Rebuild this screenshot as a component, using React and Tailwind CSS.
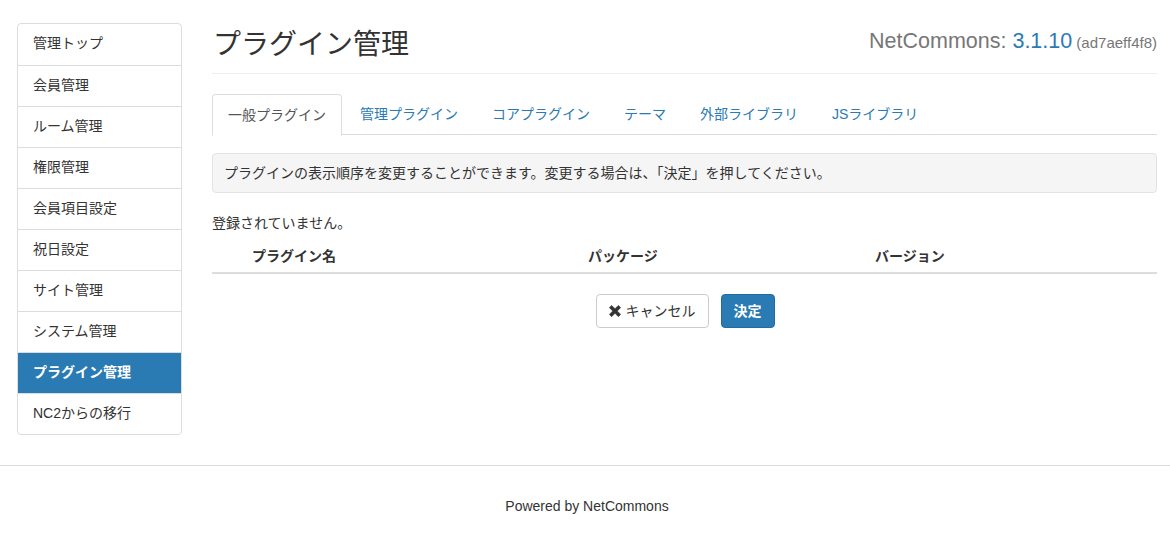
const menu = [
  '管理トップ',
  '会員管理',
  'ルーム管理',
  '権限管理',
  '会員項目設定',
  '祝日設定',
  'サイト管理',
  'システム管理',
  'プラグイン管理',
  'NC2からの移行',
]

const tabs = ['一般プラグイン', '管理プラグイン', 'コアプラグイン', 'テーマ', '外部ライブラリ', 'JSライブラリ']

const font = { fontFamily: '"Liberation Sans", "Noto Sans CJK JP", sans-serif' }

export default function App() {
  return (
    <div className="min-h-[534px] bg-white text-[14px] text-[#333]" style={font}>
      <div className="flex pt-[23px] pl-[17px] pr-[13px]">
        {/* Sidebar */}
        <div className="w-[165px] shrink-0">
          <div className="rounded border border-[#ddd] overflow-hidden">
            {menu.map((item, i) => (
              <div
                key={item}
                className={`h-[41px] flex items-center px-[15px] pb-[2px] ${i > 0 ? 'border-t border-[#ddd]' : ''} ${
                  item === 'プラグイン管理' ? 'bg-[#2a7ab3] text-white font-bold border-[#2a7ab3]' : ''
                }`}
              >
                {item}
              </div>
            ))}
          </div>
        </div>

        {/* Main */}
        <div className="flex-1 ml-[30px]">
          <div className="flex items-end justify-between border-b border-[#eee] h-[51px] pb-[14px]">
            <h1 className="text-[28px] leading-none text-[#333] ml-[1px]">プラグイン管理</h1>
            <div className="text-[#777] mb-[2px]">
              <span className="text-[21.5px]">NetCommons: </span>
              <span className="text-[21.5px] text-[#2a7ab3]">3.1.10</span>
              <span className="text-[15px]"> (ad7aeff4f8)</span>
            </div>
          </div>

          <div className="mt-[20px] flex border-b border-[#ddd] h-[41px]">
            {tabs.map((t, i) => (
              <div
                key={t}
                className={`flex items-center px-[15px] mr-[2px] rounded-t border ${
                  i === 0
                    ? 'border-[#ddd] border-b-white bg-white text-[#555] h-[42px]'
                    : 'border-transparent text-[#2a7ab3] h-[41px]'
                }`}
              >
                {t}
              </div>
            ))}
          </div>

          <div className="mt-[18px] h-[40px] flex items-center px-[11px] bg-[#f5f5f5] border border-[#e3e3e3] rounded">
            プラグインの表示順序を変更することができます。変更する場合は、「決定」を押してください。
          </div>

          <div className="mt-[20px]">登録されていません。</div>

          <div className="mt-[12px] grid grid-cols-[336px_287px_1fr] font-bold border-b-2 border-[#ddd] h-[28px] items-start pl-[40px]">
            <div>プラグイン名</div>
            <div>パッケージ</div>
            <div>バージョン</div>
          </div>

          <div className="flex justify-center gap-[12px] mt-[20px] pl-[1px]">
            <button className="h-[34px] px-[12px] flex items-center gap-[5px] bg-white border border-[#ccc] rounded text-[#333]">
              <svg width="12" height="12" viewBox="0 0 16 16">
                <path
                  d="M3.5 0.5 L8 5 L12.5 0.5 L15.5 3.5 L11 8 L15.5 12.5 L12.5 15.5 L8 11 L3.5 15.5 L0.5 12.5 L5 8 L0.5 3.5 Z"
                  fill="#333"
                  stroke="#333"
                  strokeWidth="0.8"
                  strokeLinejoin="round"
                />
              </svg>
              キャンセル
            </button>
            <button className="h-[34px] px-[12px] bg-[#2a7ab3] border border-[#246c9f] rounded text-white font-bold">
              決定
            </button>
          </div>
        </div>
      </div>

      <div className="mt-[30px] border-t border-[#ddd] h-[71px] flex items-center justify-center pt-[10px] pl-[4px]">
        Powered by NetCommons
      </div>
    </div>
  )
}
